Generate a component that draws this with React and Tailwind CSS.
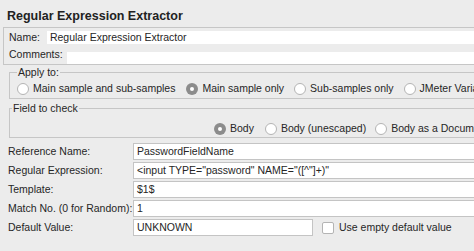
import React from 'react';

const font = { fontFamily: '"Liberation Sans", Arial, sans-serif' };

function Radio({ checked, label, className = '' }) {
  return (
    <div className={`flex items-center gap-[4px] ${className}`}>
      {checked ? (
        <span className="flex h-[12px] w-[12px] items-center justify-center rounded-full bg-[#8c8c8c]">
          <span className="h-[4px] w-[4px] rounded-full bg-white" />
        </span>
      ) : (
        <span className="h-[12px] w-[12px] rounded-full border border-[#b4b4b4] bg-white" />
      )}
      <span className="whitespace-nowrap">{label}</span>
    </div>
  );
}

function Field({ label, value, wide = true, children }) {
  return (
    <div className="flex h-[19px] items-center">
      <div className="w-[133px] shrink-0 pl-[8px] whitespace-nowrap">{label}</div>
      <div
        className={`flex h-[17px] items-center border border-[#c4c4c4] bg-white pl-[3px] whitespace-nowrap ${
          wide ? 'w-[400px]' : 'w-[180px]'
        }`}
      >
        {value}
      </div>
      {children}
    </div>
  );
}

export default function App() {
  return (
    <div
      className="h-[251px] w-[474px] overflow-hidden bg-[#ececec] text-[10.5px] text-[#262626]"
      style={font}
    >
      <div className="w-[620px]">
        <div className="h-[27px] pl-[7px] pt-[8px] text-[12.5px] font-bold leading-[16px] text-[#222]">
          Regular Expression Extractor
        </div>

        {/* name + comments */}
        <div className="ml-[3px] border border-[#c6c6c6]">
          <div className="flex h-[19px] items-center">
            <div className="shrink-0 pl-[5px] pr-[7px]">Name:</div>
            <div className="flex h-[13px] flex-1 items-center bg-white pl-[3px]">
              Regular Expression Extractor
            </div>
          </div>
          <div className="flex h-[17px] items-center">
            <div className="shrink-0 self-end pb-[1px] pl-[5px] pr-[4px]">Comments:</div>
            <div className="h-[12px] flex-1 self-end bg-white" />
          </div>
        </div>

        {/* apply to */}
        <fieldset className="ml-[9px] mt-[1px] h-[33px] border border-[#c6c6c6] pl-[7px]">
          <legend className="px-[1px] leading-[12px]">Apply to:</legend>
          <div className="flex items-center pt-[3px]">
            <Radio label="Main sample and sub-samples" />
            <Radio label="Main sample only" checked className="ml-[11px]" />
            <Radio label="Sub-samples only" className="ml-[10px]" />
            <Radio label="JMeter Variable Name to use" className="ml-[10px]" />
          </div>
        </fieldset>

        {/* field to check */}
        <fieldset className="ml-[9px] mt-[3px] h-[36px] border border-[#c6c6c6]">
          <legend className="ml-[2px] px-[1px] leading-[12px]">Field to check</legend>
          <div className="flex items-center pl-[204px] pt-[7px]">
            <Radio label="Body" checked />
            <Radio label="Body (unescaped)" className="ml-[11px]" />
            <Radio label="Body as a Document" className="ml-[9px]" />
          </div>
        </fieldset>

        <div className="mt-[4px] flex flex-col">
          <Field label="Reference Name:" value="PasswordFieldName" />
          <Field label="Regular Expression:" value={'<input TYPE="password" NAME="([^"]+)"'} />
          <Field label="Template:" value="$1$" />
          <Field label="Match No. (0 for Random):" value="1" />
          <Field label="Default Value:" value="UNKNOWN" wide={false}>
            <div className="ml-[9px] flex items-center gap-[5px]">
              <span className="h-[12px] w-[12px] rounded-[2px] border border-[#b4b4b4] bg-white" />
              <span className="whitespace-nowrap">Use empty default value</span>
            </div>
          </Field>
        </div>
      </div>
    </div>
  );
}
